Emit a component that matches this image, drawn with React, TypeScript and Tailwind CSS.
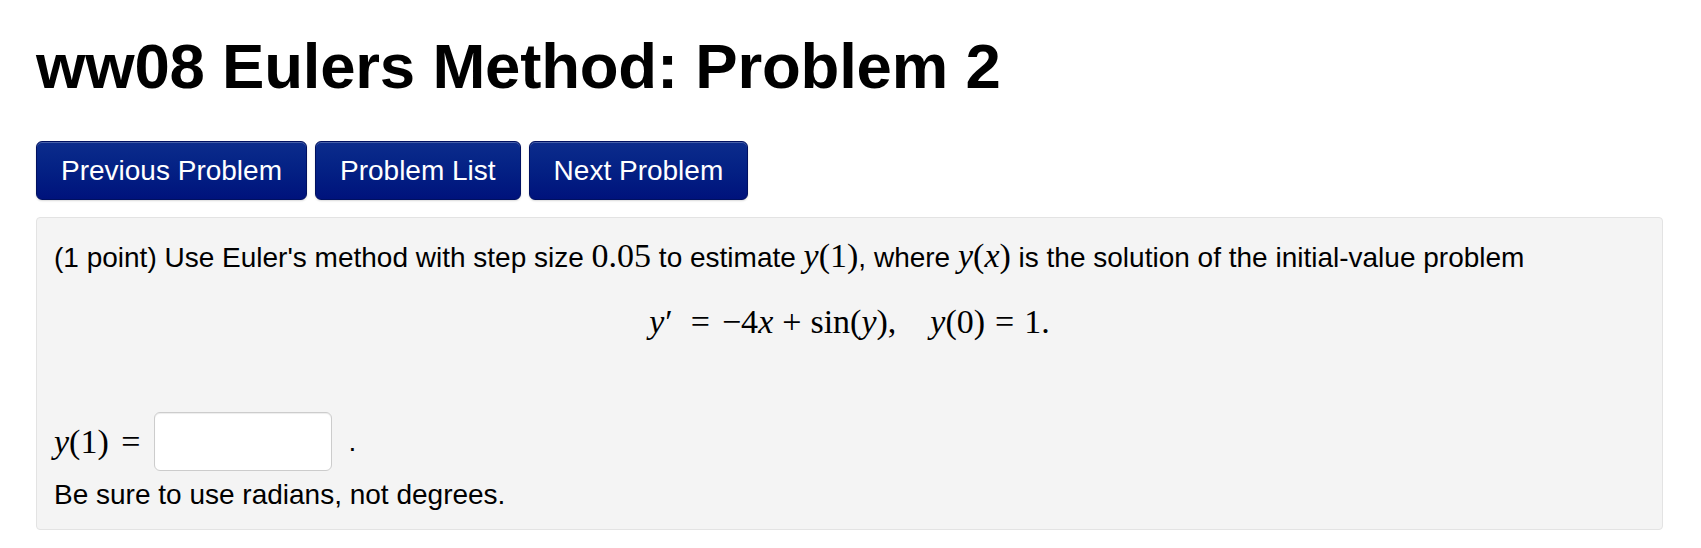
const sans = "font-['Liberation_Sans',Arial,Helvetica,sans-serif]";
const serif = "font-['Liberation_Serif','Times_New_Roman',serif]";

function NavButton({ label }: { label: string }) {
  return (
    <button
      type="button"
      className="h-[59px] rounded-[6px] border border-[#001060] bg-gradient-to-b from-[#0c2c8c] to-[#00127c] px-[24px] text-[28px] text-white shadow-[inset_0_1px_0_rgba(255,255,255,0.25),0_1px_2px_rgba(0,0,0,0.15)]"
    >
      {label}
    </button>
  );
}

function V({ children }: { children: React.ReactNode }) {
  return <span className="italic">{children}</span>;
}

export default function App() {
  return (
    <div className={`min-h-[548px] bg-white pl-[36px] pr-[38px] pt-[30px] text-black ${sans}`}>
      <h1 className="text-[63.5px] font-bold leading-[72px] tracking-[-0.2px]">ww08 Eulers Method: Problem 2</h1>

      <div className="mt-[39px] flex gap-[8px]">
        <NavButton label="Previous Problem" />
        <NavButton label="Problem List" />
        <NavButton label="Next Problem" />
      </div>

      <div className="mt-[17px] rounded-[4px] border border-[#e3e3e3] bg-[#f4f4f4] px-[17px] pb-[14px] pt-[18px] text-[28px] leading-[40px]">
        <p>
          (1 point) Use Euler's method with step size{" "}
          <span className={`${serif} text-[34px]`}>0.05</span> to estimate{" "}
          <span className={`${serif} text-[34px]`}>
            <V>y</V>(1)
          </span>
          , where{" "}
          <span className={`${serif} text-[34px]`}>
            <V>y</V>(<V>x</V>)
          </span>{" "}
          is the solution of the initial-value problem
        </p>

        <div className={`mt-[24px] flex justify-center ${serif} text-[34px]`}>
          <span>
            <V>y</V>
            <span className="ml-[1px]">′</span>
            <span className="ml-[18px] mr-[12px]">=</span>−4<V>x</V>
            <span className="mx-[9px]">+</span>sin(<V>y</V>),
            <span className="ml-[34px]">
              <V>y</V>(0)
            </span>
            <span className="mx-[10px]">=</span>1.
          </span>
        </div>

        <div className="mt-[70px] flex items-center">
          <span className={`${serif} text-[34px]`}>
            <V>y</V>(1) <span className="ml-[4px]">=</span>
          </span>
          <input
            type="text"
            className="ml-[14px] h-[59px] w-[178px] rounded-[6px] border border-[#cccccc] bg-white shadow-[inset_0_1px_1px_rgba(0,0,0,0.075)] outline-none"
          />
          <span className="ml-[16px]">.</span>
        </div>

        <p className="mt-[4px]">Be sure to use radians, not degrees.</p>
      </div>
    </div>
  );
}
